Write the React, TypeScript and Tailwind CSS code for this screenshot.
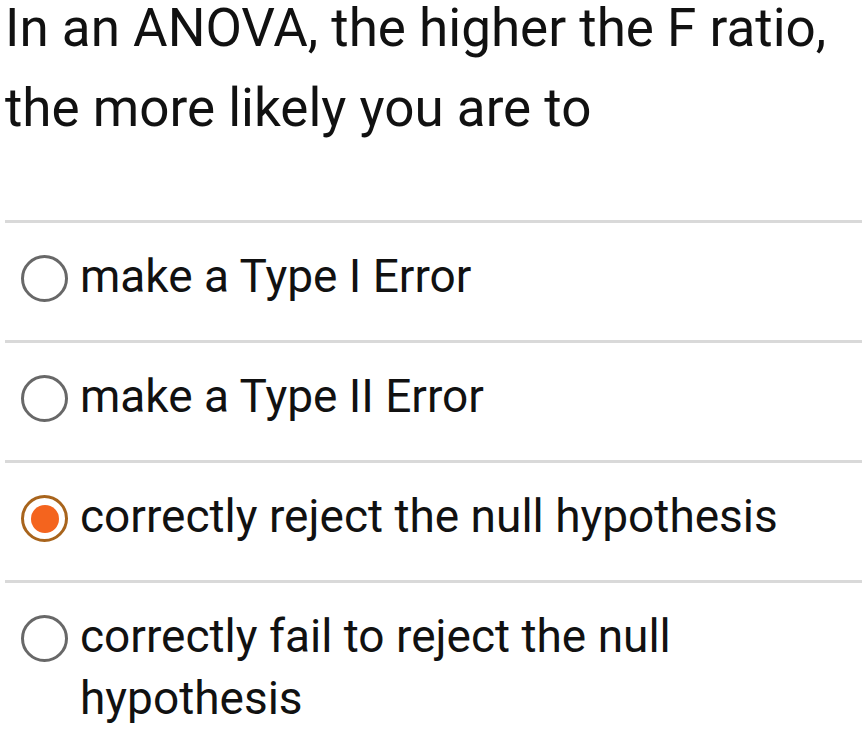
import React from 'react';

const options = [
  { id: 'a', label: 'make a Type I Error' },
  { id: 'b', label: 'make a Type II Error' },
  { id: 'c', label: 'correctly reject the null hypothesis' },
  { id: 'd', label: 'correctly fail to reject the null hypothesis' },
];

const Radio: React.FC<{ checked: boolean }> = ({ checked }) =>
  checked ? (
    <span className="mt-[10px] flex h-[47px] w-[47px] shrink-0 items-center justify-center rounded-full border-[3px] border-[#a8641c] bg-white">
      <span className="h-[28px] w-[28px] rounded-full bg-[#f4641e]" />
    </span>
  ) : (
    <span className="mt-[10px] h-[47px] w-[47px] shrink-0 rounded-full border-[3px] border-[#686868] bg-white" />
  );

export default function App() {
  const selected = 'c';

  return (
    <div
      className="min-h-[730px] w-[867px] bg-white text-[#111]"
      style={{ fontFamily: 'Roboto, "Noto Sans", sans-serif' }}
    >
      {/* Question */}
      <h1 className="flex flex-col gap-6 pl-[5px] text-[53px] font-normal leading-[56px]">
        <span>In an ANOVA, the higher the F ratio,</span>
        <span>the more likely you are to</span>
      </h1>

      {/* Answers */}
      <div className="mt-[84px] px-[5px]">
        {options.map((opt) => (
          <div
            key={opt.id}
            className="flex items-start gap-[12px] border-t-[3px] border-[#d9d9d9] pt-[22px] pb-[33px]"
          >
            <span className="ml-[16px] flex">
              <Radio checked={opt.id === selected} />
            </span>
            <span className="flex-1 pr-[10px] text-[46px] leading-[62px]">{opt.label}</span>
          </div>
        ))}
      </div>
    </div>
  );
}
